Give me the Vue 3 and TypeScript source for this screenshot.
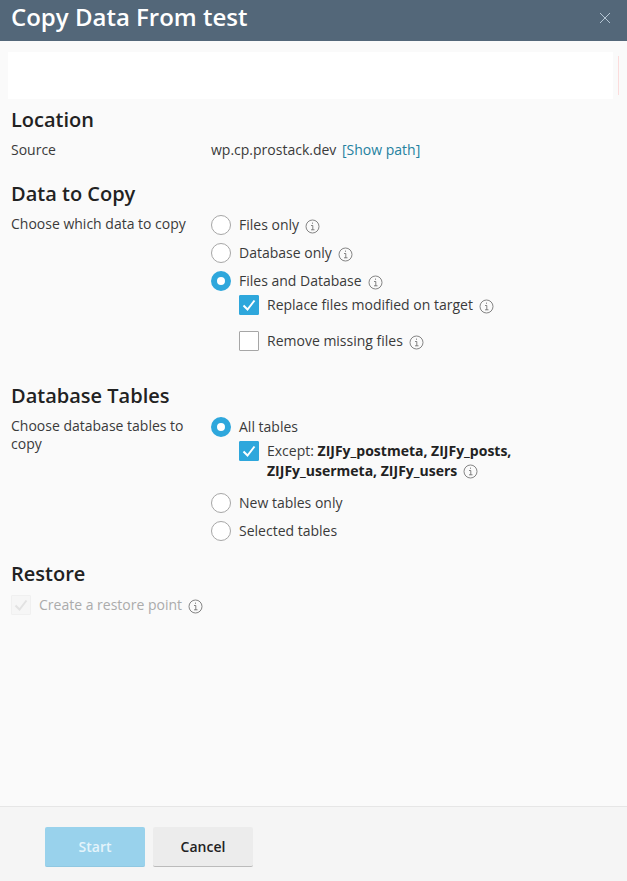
<script setup lang="ts">
interface Option {
  label: string;
  checked?: boolean;
}

const dataOptions: Option[] = [
  { label: "Files only" },
  { label: "Database only" },
  { label: "Files and Database", checked: true },
];
</script>

<template>
  <div class="dialog">
    <header class="dialog-header">
      <h1>Copy Data From test</h1>
      <button class="close" aria-label="Close">
        <svg width="12" height="12" viewBox="0 0 12 12" fill="none" stroke="currentColor" stroke-width="1">
          <path d="M1 1 11 11" />
          <path d="M11 1 1 11" />
        </svg>
      </button>
    </header>

    <main class="dialog-body">
      <div class="notice-row">
        <div class="notice"></div>
        <div class="notice-edge"></div>
      </div>

      <section class="location">
        <h2>Location</h2>
        <div class="row">
          <div class="label">Source</div>
          <div class="value">wp.cp.prostack.dev <a class="link">[Show path]</a></div>
        </div>
      </section>

      <section class="data">
        <h2>Data to Copy</h2>
        <div class="row">
          <div class="label">Choose which data to copy</div>
          <div class="value">
            <div v-for="opt in dataOptions" :key="opt.label" class="option">
              <span class="radio" :class="{ on: opt.checked }"></span>
              <span>{{ opt.label }}</span>
              <svg class="info" viewBox="0 0 15 15" fill="none" stroke="currentColor">
                <circle cx="7.5" cy="7.5" r="6.5" />
                <path d="M6 6.5H7.8V10.8M6 10.8H9.5M7.5 3.6V4.8" />
              </svg>
            </div>
            <div class="sub first">
              <span class="check on">
                <svg viewBox="0 0 20 20" fill="none" stroke="#fff" stroke-width="2">
                  <path d="M4.5 10.5 8.5 14.5 15.5 5.5" />
                </svg>
              </span>
              <span>Replace files modified on target</span>
              <svg class="info" viewBox="0 0 15 15" fill="none" stroke="currentColor">
                <circle cx="7.5" cy="7.5" r="6.5" />
                <path d="M6 6.5H7.8V10.8M6 10.8H9.5M7.5 3.6V4.8" />
              </svg>
            </div>
            <div class="sub second">
              <span class="check"></span>
              <span>Remove missing files</span>
              <svg class="info" viewBox="0 0 15 15" fill="none" stroke="currentColor">
                <circle cx="7.5" cy="7.5" r="6.5" />
                <path d="M6 6.5H7.8V10.8M6 10.8H9.5M7.5 3.6V4.8" />
              </svg>
            </div>
          </div>
        </div>
      </section>

      <section class="tables">
        <h2>Database Tables</h2>
        <div class="row">
          <div class="label">Choose database tables to copy</div>
          <div class="value">
            <div class="option">
              <span class="radio on"></span>
              <span>All tables</span>
            </div>
            <div class="sub except">
              <span class="check on">
                <svg viewBox="0 0 20 20" fill="none" stroke="#fff" stroke-width="2">
                  <path d="M4.5 10.5 8.5 14.5 15.5 5.5" />
                </svg>
              </span>
              <div class="except-text">
                <div>Except: <b>ZIJFy_postmeta, ZIJFy_posts,</b></div>
                <div>
                  <b>ZIJFy_usermeta, ZIJFy_users</b>
                  <svg class="info inline" viewBox="0 0 15 15" fill="none" stroke="currentColor">
                    <circle cx="7.5" cy="7.5" r="6.5" />
                    <path d="M6 6.5H7.8V10.8M6 10.8H9.5M7.5 3.6V4.8" />
                  </svg>
                </div>
              </div>
            </div>
            <div class="option">
              <span class="radio"></span>
              <span>New tables only</span>
            </div>
            <div class="option">
              <span class="radio"></span>
              <span>Selected tables</span>
            </div>
          </div>
        </div>
      </section>

      <section class="restore">
        <h2>Restore</h2>
        <div class="sub disabled">
          <span class="check">
            <svg viewBox="0 0 20 20" fill="none" stroke="#e2e2e2" stroke-width="2">
              <path d="M4.5 10.5 8.5 14.5 15.5 5.5" />
            </svg>
          </span>
          <span class="muted">Create a restore point</span>
          <svg class="info" viewBox="0 0 15 15" fill="none" stroke="currentColor">
            <circle cx="7.5" cy="7.5" r="6.5" />
            <path d="M6 6.5H7.8V10.8M6 10.8H9.5M7.5 3.6V4.8" />
          </svg>
        </div>
      </section>
    </main>

    <footer class="dialog-footer">
      <button class="btn primary">Start</button>
      <button class="btn">Cancel</button>
    </footer>
  </div>
</template>

<style scoped>
.dialog {
  width: 627px;
  height: 881px;
  display: flex;
  flex-direction: column;
  background: #fafafa;
  color: #3a3a3a;
  font-family: "Open Sans", "Noto Sans", sans-serif;
  font-size: 14px;
  line-height: 18px;
  overflow: hidden;
}

.dialog-header {
  flex: none;
  height: 41px;
  padding: 0 16px 6px 11px;
  box-sizing: border-box;
  display: flex;
  align-items: center;
  justify-content: space-between;
  background: #536779;
}

.dialog-header h1 {
  margin: 0 0 2px;
  color: #fff;
  font-size: 24px;
  font-weight: 600;
  line-height: 35px;
}

.close {
  display: flex;
  padding: 0;
  border: 0;
  background: none;
  color: #b5c5d3;
}

.dialog-body {
  flex: 1;
  padding: 11px 0 0 11px;
}

.notice-row {
  display: flex;
  align-items: center;
  height: 47px;
  margin-left: -3px;
}

.notice {
  width: 605px;
  height: 47px;
  background: #fff;
}

.notice-edge {
  width: 1px;
  height: 39px;
  margin-left: 5px;
  background: #fbdcdc;
}

h2 {
  margin: 0;
  color: #222;
  font-size: 20px;
  font-weight: 600;
  line-height: 28px;
}

section {
  margin-top: 7px;
}

.location h2 {
  margin-bottom: 7px;
}

.data {
  margin-top: 21px;
}

.data h2 {
  margin-bottom: 7px;
}

.tables {
  margin-top: 31px;
}

.tables h2 {
  margin-bottom: 7px;
}

.restore {
  margin-top: 11px;
}

.restore h2 {
  margin-bottom: 7px;
}

.row {
  display: flex;
}

.label {
  width: 200px;
  flex: none;
  padding-right: 10px;
  box-sizing: border-box;
}

.link {
  margin-left: 2px;
  color: #24819f;
}

.option {
  display: flex;
  align-items: center;
  gap: 8px;
  height: 20px;
  margin-bottom: 8px;
}

.radio {
  width: 20px;
  height: 20px;
  box-sizing: border-box;
  border: 1px solid #a6a6a6;
  border-radius: 50%;
  background: #fff;
}

.radio.on {
  border: 6px solid #2ea7dc;
}

.sub {
  display: flex;
  align-items: center;
  gap: 8px;
  margin-left: 28px;
}

.sub.first {
  margin-top: -4px;
  height: 20px;
}

.sub.second {
  margin-top: 16px;
  height: 20px;
}

.sub.except {
  align-items: flex-start;
  margin-top: -4px;
  margin-bottom: 12px;
}

.except-text {
  width: 256px;
  line-height: 20px;
}

.except-text b {
  font-weight: 700;
  color: #222;
}

.restore .sub {
  margin-left: 0;
  height: 20px;
}

.check {
  width: 20px;
  height: 20px;
  flex: none;
  box-sizing: border-box;
  border: 1px solid #a6a6a6;
  border-radius: 1px;
  background: #fff;
}

.check svg {
  display: block;
  width: 20px;
  height: 20px;
  margin: -1px;
}

.check.on {
  border-color: #2ea7dc;
  background: #2ea7dc;
}

.disabled .check {
  border-color: #f0f0f0;
  background: #f6f6f6;
}

.muted {
  color: #ababab;
}

.info {
  width: 15px;
  height: 15px;
  flex: none;
  margin: 2px 0 0 -2px;
  color: #666;
  stroke-width: 0.8;
}

.info.inline {
  margin: 0 0 0 6px;
  vertical-align: -3px;
}

.dialog-footer {
  flex: none;
  height: 75px;
  box-sizing: border-box;
  display: flex;
  gap: 8px;
  padding: 20px 0 0 45px;
  border-top: 1px solid #e6e6e6;
  background: #f5f5f5;
}

.btn {
  width: 100px;
  height: 40px;
  border: 0;
  border-bottom: 1px solid #bbb;
  border-radius: 2px;
  background: #ececec;
  color: #222;
  font: 600 14px "Open Sans", "Noto Sans", sans-serif;
}

.btn.primary {
  border-bottom-color: #8fc8e2;
  background: #99d2ec;
  color: #e4f4fb;
}
</style>
